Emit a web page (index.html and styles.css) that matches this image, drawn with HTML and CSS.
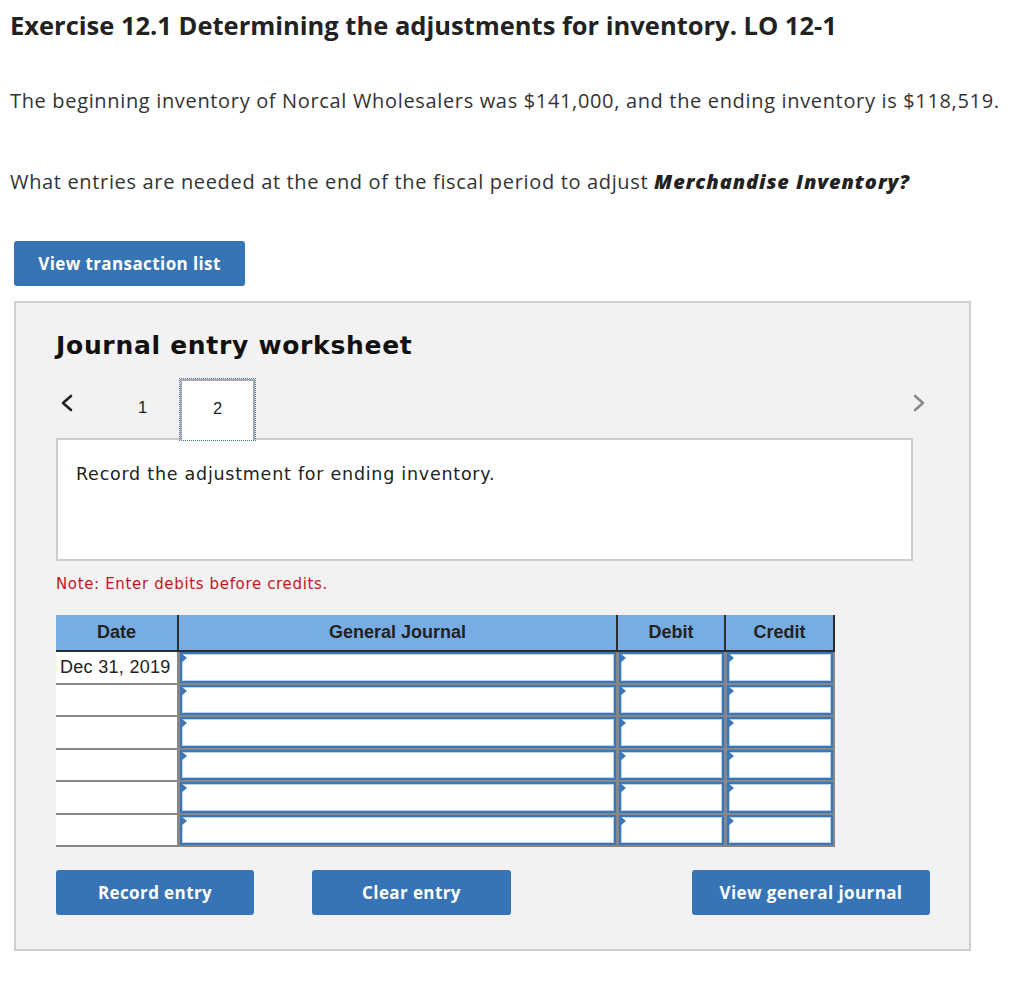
FILE: index.html
```html
<!DOCTYPE html>
<html>
<head>
<meta charset="utf-8">
<link rel="stylesheet" href="styles.css">
</head>
<body>
<h1 class="title">Exercise 12.1 Determining the adjustments for inventory. LO 12-1</h1>
<p class="para p1">The beginning inventory of Norcal Wholesalers was $141,000, and the ending inventory is $118,519.</p>
<p class="para p2">What entries are needed at the end of the fiscal period to adjust <b><i>Merchandise Inventory?</i></b></p>
<button class="btn btn-list">View transaction list</button>

<div class="panel">
  <h2 class="ws-title">Journal entry worksheet</h2>
  <div class="nav">
    <span class="chev chev-left"><svg width="16" height="20" viewBox="0 0 16 20"><path d="M12 3 L4 10 L12 17" fill="none" stroke="#222" stroke-width="2.6" stroke-linecap="round" stroke-linejoin="round"/></svg></span>
    <span class="tab">1</span>
    <span class="tab tab-active">2</span>
    <span class="nav-spacer"></span>
    <span class="chev chev-right"><svg width="16" height="20" viewBox="0 0 16 20"><path d="M4 3 L12 10 L4 17" fill="none" stroke="#8a8a8a" stroke-width="2.6" stroke-linecap="round" stroke-linejoin="round"/></svg></span>
  </div>
  <div class="desc">Record the adjustment for ending inventory.</div>
  <p class="note">Note: Enter debits before credits.</p>

  <table class="journal">
    <colgroup>
      <col class="c-date"><col class="c-gj"><col class="c-debit"><col class="c-credit">
    </colgroup>
    <thead>
      <tr><th>Date</th><th>General Journal</th><th>Debit</th><th>Credit</th></tr>
    </thead>
    <tbody>
      <tr><td class="date">Dec 31, 2019</td><td class="in"><div class="box"></div></td><td class="in"><div class="box"></div></td><td class="in"><div class="box"></div></td></tr>
      <tr><td class="date"></td><td class="in"><div class="box"></div></td><td class="in"><div class="box"></div></td><td class="in"><div class="box"></div></td></tr>
      <tr><td class="date"></td><td class="in"><div class="box"></div></td><td class="in"><div class="box"></div></td><td class="in"><div class="box"></div></td></tr>
      <tr><td class="date"></td><td class="in"><div class="box"></div></td><td class="in"><div class="box"></div></td><td class="in"><div class="box"></div></td></tr>
      <tr><td class="date"></td><td class="in"><div class="box"></div></td><td class="in"><div class="box"></div></td><td class="in"><div class="box"></div></td></tr>
      <tr><td class="date"></td><td class="in"><div class="box"></div></td><td class="in"><div class="box"></div></td><td class="in"><div class="box"></div></td></tr>
    </tbody>
  </table>

  <div class="actions">
    <button class="btn btn-record">Record entry</button>
    <button class="btn btn-clear">Clear entry</button>
    <span class="actions-spacer"></span>
    <button class="btn btn-view">View general journal</button>
  </div>
</div>
</body>
</html>
```

FILE: styles.css
```css
html, body {
  margin: 0;
  padding: 0;
  background: #fff;
}
body {
  padding: 0 0 0 10px;
  font-family: "Open Sans", "Liberation Sans", sans-serif;
  color: #333;
}
.title {
  margin: 0;
  padding-top: 9px;
  font-size: 25.5px;
  font-weight: 700;
  line-height: 32px;
  color: #222;
}
.para {
  margin: 0;
  font-size: 20px;
  letter-spacing: 0.66px;
  line-height: 24px;
  color: #333;
}
.p1 { margin-top: 48px; }
.p2 { margin-top: 57px; }
.p2 b { font-weight: 800; color: #222; letter-spacing: 0.9px; }

.btn {
  display: block;
  border: none;
  border-radius: 3px;
  background: #3674b5;
  color: #fff;
  font-family: "Open Sans", "Liberation Sans", sans-serif;
  font-weight: 700;
  font-size: 17px;
  letter-spacing: 0.4px;
  height: 45px;
  padding: 0;
  cursor: pointer;
}
.btn-list {
  margin: 47px 0 0 4px;
  width: 231px;
}

.panel {
  box-sizing: border-box;
  margin: 15px 0 0 4px;
  width: 957px;
  height: 650px;
  background: #f2f2f2;
  border: 2px solid #cfcfcf;
  padding: 0 0 0 40px;
  font-family: "DejaVu Sans", Verdana, sans-serif;
}
.ws-title {
  margin: 0;
  padding-top: 28px;
  font-family: "DejaVu Sans", Verdana, sans-serif;
  font-size: 25px;
  letter-spacing: 0.7px;
  font-weight: 700;
  line-height: 30px;
  color: #111;
}
.nav {
  display: flex;
  align-items: center;
  margin-top: 18px;
  width: 857px;
  height: 61px;
  font-family: "Liberation Sans", Arial, sans-serif;
  font-size: 16.5px;
  color: #222;
  position: relative;
  z-index: 1;
}
.chev {
  display: flex;
  align-items: center;
  margin-bottom: 13px;
}
.chev-left { margin-left: 3px; width: 16px; }
.chev-right { margin-right: -14px; }
.tab {
  box-sizing: border-box;
  width: 75px;
  height: 61px;
  display: flex;
  align-items: center;
  justify-content: center;
  padding-bottom: 5px;
}
.nav .tab:nth-of-type(2) { margin-left: 30px; }
.tab-active {
  background: #fff;
  border: 2px solid #a9a9a9;
  border-bottom: none;
  outline: 1px dotted #3b7bd0;
  outline-offset: 0;
}
.nav-spacer { flex: 1; }

.desc {
  box-sizing: border-box;
  margin-top: -2px;
  width: 857px;
  height: 123px;
  background: #fff;
  border: 2px solid #cccccc;
  padding: 22px 0 0 18px;
  font-size: 17.5px;
  letter-spacing: 0.75px;
  line-height: 24px;
  color: #222;
}
.note {
  margin: 13px 0 0 0;
  font-size: 15px;
  letter-spacing: 0.65px;
  line-height: 20px;
  color: #c4161c;
}

.journal {
  margin-top: 21px;
  width: 778px;
  table-layout: fixed;
  border-collapse: collapse;
  font-family: "Liberation Sans", Arial, sans-serif;
  font-size: 18px;
}
.c-date { width: 122px; }
.c-gj { width: 439px; }
.c-debit { width: 108px; }
.c-credit { width: 109px; }

.journal th {
  background: #78ade3;
  height: 35px;
  padding: 0;
  font-weight: 700;
  color: #222;
  border-right: 2px solid #2c2c2c;
  border-bottom: 2px solid #2c2c2c;
  text-align: center;
}
.journal td {
  padding: 0;
  height: 30.5px;
  border-right: 2px solid #878787;
  border-bottom: 2px solid #878787;
  background: #fff;
}
.journal td.date {
  padding-left: 4px;
  color: #222;
  letter-spacing: 0.3px;
}
.journal td.in {
  background: #878787;
  padding: 0;
}
.box {
  position: relative;
  box-sizing: border-box;
  height: 30.5px;
  margin: 0 0 0 1px;
  background: #fff;
  border: 2px solid #3b77b8;
  box-shadow: inset 0 0 0 1px #bcd3ec;
}
.box::before {
  content: "";
  position: absolute;
  left: -1px;
  top: -1px;
  border-top: 5px solid transparent;
  border-bottom: 5px solid transparent;
  border-left: 6px solid #3b77b8;
}

.actions {
  display: flex;
  align-items: center;
  margin-top: 23px;
  width: 874px;
}
.btn-record { width: 198px; }
.btn-clear { width: 199px; margin-left: 58px; }
.actions-spacer { flex: 1; }
.btn-view { width: 238px; }
```
